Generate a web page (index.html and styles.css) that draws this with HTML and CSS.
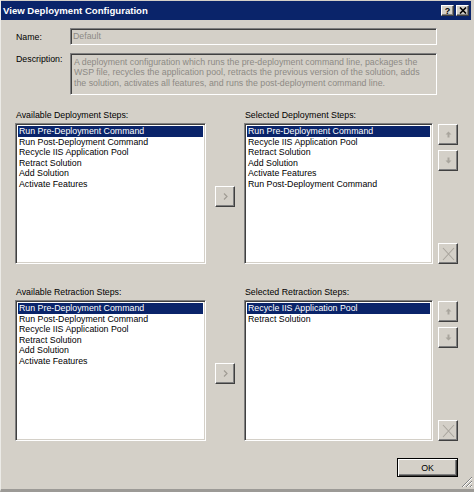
FILE: index.html
```html
<!DOCTYPE html>
<html lang="en">
<head>
  <meta charset="UTF-8" />
  <title>View Deployment Configuration</title>
  <link rel="stylesheet" href="styles.css">
</head>
<body>
  <div class="window">
    <div class="titlebar">
      <span class="title">View Deployment Configuration</span>
      <div class="caption-buttons">
        <span class="cap-btn">?</span>
        <span class="cap-btn">
          <svg width="8" height="7" viewBox="0 0 8 7"><path d="M1 0.5 L7 6.5 M7 0.5 L1 6.5" stroke="#000" stroke-width="1.6"/></svg>
        </span>
      </div>
    </div>

    <div class="content">
      <div class="field-row">
        <span class="field-label">Name:</span>
        <div class="edit single">Default</div>
      </div>
      <div class="field-row">
        <span class="field-label">Description:</span>
        <div class="edit multi">A deployment configuration which runs the pre-deployment command line, packages the WSP file, recycles the application pool, retracts the previous version of the solution, adds the solution, activates all features, and runs the post-deployment command line.</div>
      </div>

      <div class="steps first">
        <div class="steps-label">Available Deployment Steps:</div>
        <div class="steps-label selected-label">Selected Deployment Steps:</div>
        <ul class="listbox">
          <li class="active">Run Pre-Deployment Command</li>
          <li>Run Post-Deployment Command</li>
          <li>Recycle IIS Application Pool</li>
          <li>Retract Solution</li>
          <li>Add Solution</li>
          <li>Activate Features</li>
        </ul>
        <div class="add-col">
          <span class="btn small">
            <svg width="5" height="7" viewBox="0 0 5 7"><path d="M1 0.5 L4 3.5 L1 6.5" fill="none" stroke="#a09c94" stroke-width="1.2"/></svg>
          </span>
        </div>
        <ul class="listbox">
          <li class="active">Run Pre-Deployment Command</li>
          <li>Recycle IIS Application Pool</li>
          <li>Retract Solution</li>
          <li>Add Solution</li>
          <li>Activate Features</li>
          <li>Run Post-Deployment Command</li>
        </ul>
        <div class="side-col">
          <span class="btn small">
            <svg width="7" height="7" viewBox="0 0 7 7"><path d="M3.5 0.5 L6.5 3.5 L4.5 3.5 L4.5 6.5 L2.5 6.5 L2.5 3.5 L0.5 3.5 Z" fill="#a9a59d"/></svg>
          </span>
          <span class="btn small">
            <svg width="7" height="7" viewBox="0 0 7 7"><path d="M3.5 6.5 L6.5 3.5 L4.5 3.5 L4.5 0.5 L2.5 0.5 L2.5 3.5 L0.5 3.5 Z" fill="#a9a59d"/></svg>
          </span>
          <span class="btn small remove">
            <svg width="13" height="14" viewBox="0 0 13 14"><path d="M1 1 L12 13 M12 1 L1 13" stroke="#a9a59d" stroke-width="1.1"/></svg>
          </span>
        </div>
      </div>

      <div class="steps second">
        <div class="steps-label">Available Retraction Steps:</div>
        <div class="steps-label selected-label">Selected Retraction Steps:</div>
        <ul class="listbox">
          <li class="active">Run Pre-Deployment Command</li>
          <li>Run Post-Deployment Command</li>
          <li>Recycle IIS Application Pool</li>
          <li>Retract Solution</li>
          <li>Add Solution</li>
          <li>Activate Features</li>
        </ul>
        <div class="add-col">
          <span class="btn small">
            <svg width="5" height="7" viewBox="0 0 5 7"><path d="M1 0.5 L4 3.5 L1 6.5" fill="none" stroke="#a09c94" stroke-width="1.2"/></svg>
          </span>
        </div>
        <ul class="listbox">
          <li class="active">Recycle IIS Application Pool</li>
          <li>Retract Solution</li>
        </ul>
        <div class="side-col">
          <span class="btn small">
            <svg width="7" height="7" viewBox="0 0 7 7"><path d="M3.5 0.5 L6.5 3.5 L4.5 3.5 L4.5 6.5 L2.5 6.5 L2.5 3.5 L0.5 3.5 Z" fill="#a9a59d"/></svg>
          </span>
          <span class="btn small">
            <svg width="7" height="7" viewBox="0 0 7 7"><path d="M3.5 6.5 L6.5 3.5 L4.5 3.5 L4.5 0.5 L2.5 0.5 L2.5 3.5 L0.5 3.5 Z" fill="#a9a59d"/></svg>
          </span>
          <span class="btn small remove">
            <svg width="13" height="14" viewBox="0 0 13 14"><path d="M1 1 L12 13 M12 1 L1 13" stroke="#a9a59d" stroke-width="1.1"/></svg>
          </span>
        </div>
      </div>
    </div>

    <div class="footer">
      <span class="btn ok">OK</span>
      <svg class="grip" width="13" height="13" viewBox="0 0 13 13">
        <path d="M12 2 L2 12 M12 6 L6 12 M12 10 L10 12" stroke="#808080" stroke-width="1"/>
        <path d="M12 3 L3 12 M12 7 L7 12 M12 11 L11 12" stroke="#ffffff" stroke-width="1"/>
      </svg>
    </div>
  </div>
</body>
</html>
```

FILE: styles.css
```css
* {
  box-sizing: border-box;
  margin: 0;
  padding: 0;
}

html, body {
  width: 474px;
  height: 492px;
  overflow: hidden;
}

body {
  background-color: #d4d0c8;
  font-family: "Liberation Sans", Arial, sans-serif;
  font-size: 8.8px;
  color: #000;
}

.window {
  display: flex;
  flex-direction: column;
  height: 492px;
  border-bottom: 3px solid #9c9a96;
  border-left: 1px solid #ecebe7;
}

.titlebar {
  display: flex;
  align-items: center;
  justify-content: space-between;
  height: 19px;
  margin: 1px 3px 0 0;
  padding: 0 2px 0 2px;
  background-color: #0a246a;
}

.title {
  color: #fff;
  font-weight: bold;
  font-size: 9.6px;
}

.caption-buttons {
  display: flex;
  gap: 2px;
}

.cap-btn {
  display: flex;
  align-items: center;
  justify-content: center;
  width: 13px;
  height: 11px;
  background-color: #d4d0c8;
  border: 1px solid;
  border-color: #fff #404040 #404040 #fff;
  box-shadow: inset -1px -1px #808080;
  font-weight: bold;
  font-size: 9px;
}

.content {
  padding: 0 0 0 14px;
}

.field-row {
  display: flex;
  align-items: flex-start;
  margin-top: 8px;
}

.field-row:first-child {
  align-items: center;
}

.field-label {
  width: 55px;
  padding-left: 1px;
  line-height: 12px;
}

.edit {
  width: 367px;
  background-color: #d4d0c8;
  color: #8d8a85;
  border: 1px solid;
  border-color: #808080 #fff #fff #808080;
  box-shadow: inset 1px 1px #404040;
  padding: 2px 3px;
}

.edit.single {
  height: 17px;
  line-height: 12px;
  padding: 1px 2px;
}

.edit.multi {
  height: 42px;
  line-height: 10.3px;
  padding: 3px 3px;
}

.steps {
  display: grid;
  grid-template-columns: 191px 38px 189px 25px;
  grid-template-rows: 10px 141px;
  row-gap: 3px;
}

.steps > :nth-child(n+3) {
  grid-row: 2;
}

.steps.first {
  margin-top: 15px;
}

.steps.second {
  margin-top: 23px;
}

.steps-label {
  line-height: 10px;
  grid-row: 1;
  padding-left: 1px;
}

.selected-label {
  grid-column: 3;
}

.listbox {
  list-style: none;
  background-color: #fff;
  border: 1px solid;
  border-color: #808080 #fff #fff #808080;
  box-shadow: inset 1px 1px #404040, inset -1px -1px #d4d0c8;
  padding: 2px 2px;
  overflow: hidden;
}

.listbox li {
  line-height: 10.5px;
  padding-left: 1px;
  white-space: nowrap;
}

.listbox li.active {
  background-color: #0a246a;
  color: #fff;
}

.add-col {
  display: flex;
  align-items: center;
  justify-content: center;
  padding-top: 6px;
}

.side-col {
  display: flex;
  flex-direction: column;
  align-items: flex-end;
  gap: 5px;
  padding-top: 1px;
}

.side-col .remove {
  margin-top: auto;
}

.btn {
  display: flex;
  align-items: center;
  justify-content: center;
  background-color: #d4d0c8;
  border: 1px solid;
  border-color: #fff #404040 #404040 #fff;
  box-shadow: inset -1px -1px #808080;
}

.btn.small {
  width: 20px;
  height: 21px;
}

.footer {
  display: flex;
  justify-content: flex-end;
  align-items: flex-end;
  margin-top: auto;
}

.btn.ok {
  width: 61px;
  height: 19px;
  margin-bottom: 12px;
  border: 1px solid #000;
  box-shadow: inset 1px 1px #fff, inset -1px -1px #404040, inset -2px -2px #808080;
  font-size: 8.8px;
}

.grip {
  margin: 0 1px 1px 2px;
}
```
